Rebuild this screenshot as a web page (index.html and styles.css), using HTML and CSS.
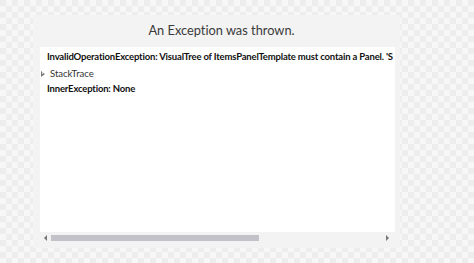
FILE: index.html
```html
<!DOCTYPE html>
<html>
<head>
<meta charset="utf-8">
<link rel="stylesheet" href="styles.css">
</head>
<body>
<div class="dialog">
  <div class="title">An Exception was thrown.</div>
  <div class="content">
    <div class="scroll-area">
      <div class="line bold">InvalidOperationException: VisualTree of ItemsPanelTemplate must contain a Panel. 'S</div>
      <div class="line trace"><span class="arrow"></span>StackTrace</div>
      <div class="line bold">InnerException: None</div>
    </div>
    <div class="hscroll">
      <span class="sarrow left"></span>
      <div class="track"><div class="thumb"></div></div>
      <span class="sarrow right"></span>
    </div>
  </div>
</div>
</body>
</html>
```

FILE: styles.css
```css
html, body {
  margin: 0;
  padding: 0;
}
body {
  width: 474px;
  height: 263px;
  overflow: hidden;
  background-color: #f1f1f1;
  background-image: conic-gradient(#f7f7f7 25%, #ededed 25% 50%, #f7f7f7 50% 75%, #ededed 75%);
  background-size: 12px 12px;
  font-family: "Lato", "Open Sans", sans-serif;
  font-variant-ligatures: none;
  padding: 15px 74px 15px 33px;
  box-sizing: border-box;
}
.dialog {
  background: #f3f3f3;
  height: 233px;
  padding: 0 5px 0 7px;
  display: flex;
  flex-direction: column;
}
.title {
  height: 32px;
  font-size: 12.8px;
  color: #3a3a3a;
  text-align: center;
  line-height: 30px;
  padding-left: 8px;
}
.content {
  display: flex;
  flex-direction: column;
  flex: 1;
}
.scroll-area {
  background: #ffffff;
  height: 185px;
  overflow: hidden;
  padding-top: 2px;
  box-sizing: border-box;
}
.line {
  white-space: nowrap;
  font-size: 9.5px;
  color: #111;
}
.bold {
  font-weight: 700;
  padding-left: 7px;
  line-height: 15px;
  letter-spacing: -0.18px;
}
.trace {
  display: flex;
  align-items: center;
  color: #333;
  line-height: 15px;
  margin-top: 2px;
  padding-left: 1px;
}
.arrow {
  width: 0;
  height: 0;
  border-left: 4px solid #777;
  border-top: 3px solid transparent;
  border-bottom: 3px solid transparent;
  margin-right: 5px;
  position: relative;
}
.arrow::after {
  content: "";
  position: absolute;
  left: -3px;
  top: -1.5px;
  border-left: 2px solid #fff;
  border-top: 1.5px solid transparent;
  border-bottom: 1.5px solid transparent;
}
.hscroll {
  height: 11px;
  display: flex;
  align-items: center;
  padding: 0 6px 0 4px;
}
.sarrow {
  width: 0;
  height: 0;
  border-top: 3px solid transparent;
  border-bottom: 3px solid transparent;
}
.sarrow.left {
  border-right: 3px solid #777;
}
.sarrow.right {
  border-left: 3px solid #777;
}
.track {
  flex: 1;
  padding: 0 4px;
}
.thumb {
  width: 208px;
  height: 6px;
  background: #c2c2c8;
}
```
